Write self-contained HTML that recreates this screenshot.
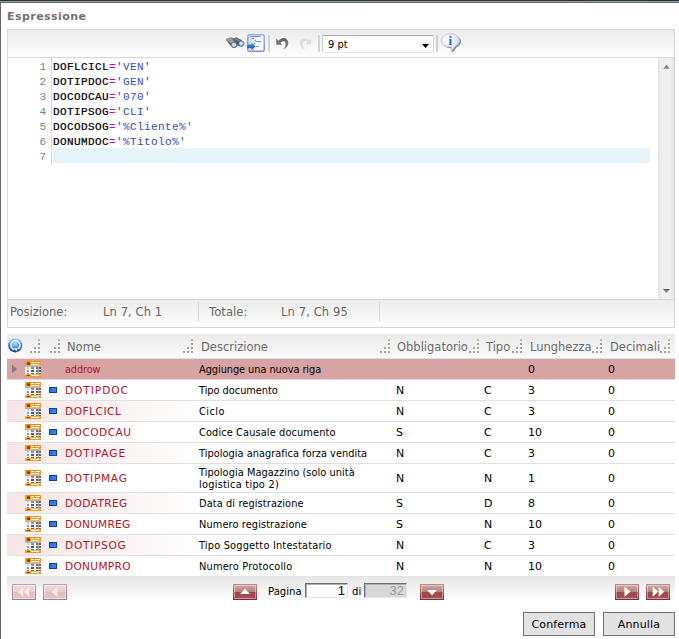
<!DOCTYPE html>
<html lang="it">
<head>
<meta charset="utf-8">
<title>Espressione</title>
<style>
*{box-sizing:border-box;margin:0;padding:0}
html,body{width:679px;height:639px;overflow:hidden;background:#fff}
body{position:relative;font-family:"DejaVu Sans","Liberation Sans",sans-serif;font-size:11px;color:#000}
.abs{position:absolute}
i{font-style:normal}
#frameTop{left:0;top:0;width:679px;height:3px;background:linear-gradient(#1f3a30 0,#1f3a30 1px,#9a9a9a 1px,#9a9a9a 2px,#676767 2px)}
#frameTop::before{content:'';position:absolute;left:0;top:0;width:679px;height:1px;background:linear-gradient(90deg,#1f3a30,#223c36 50%,#1f3448)}
#frameLeft{left:0;top:2px;width:1px;height:637px;background:#676767}
#title{left:7px;top:10px;font-weight:bold;font-size:11px;color:#727272;line-height:14px;white-space:nowrap;letter-spacing:.45px}
#toolbar{left:7px;top:29px;width:668px;height:29px;border:1px solid #d6d6d6;background:linear-gradient(#ececec,#fefefe)}
.sep{position:absolute;top:5px;width:2px;height:17px;background:#d2d2d2}
#fsel{left:314px;top:5px;width:112px;height:18px;background:#fff;border:1px solid;border-color:#a2a7b4 #d2d9e6 #dde3ee #c9d0de;border-radius:2px}
#fsel span{position:absolute;left:5px;top:2px;font-size:9.9px;line-height:14px}
#editor{left:7px;top:57px;width:668px;height:243px;border:1px solid #d6d6d6;background:#fff}
#gutter{left:0;top:0;width:44px;height:107px;border-right:1px solid #d6d6d6;background:#fff}
.ln{position:absolute;left:0;width:38px;text-align:right;font-family:"Liberation Mono",monospace;font-size:11px;line-height:15px;color:#808080;height:15px}
.cl{position:absolute;left:45px;height:15px;line-height:15px;font-family:"Liberation Mono",monospace;font-size:11px;letter-spacing:0.4px;white-space:pre;color:#000}
.cl .k{-webkit-text-stroke:.22px #000}
.cl .o{color:#c800c8}
.cl .s{color:#3848c4}
#curline{left:45px;top:90px;width:597px;height:15px;background:#e6f3f8}
#vscroll{left:650px;top:0;width:16px;height:241px;background:linear-gradient(90deg,#e3e3e3,#eeeeee 3px,#f1f1f1 12px,#e4e4e4)}
#status{left:7px;top:299px;width:668px;height:29px;border:1px solid #d6d6d6;background:linear-gradient(#ececec,#fefefe);color:#666}
#status span{position:absolute;top:5px;line-height:14px;white-space:nowrap;font-size:11.5px}
#status i{position:absolute;top:1px;width:1px;height:21px;background:#d8d8d8}
#ghead{left:7px;top:334px;width:668px;height:25px;background:linear-gradient(#e9e9e9,#fbfbfb);color:#666;border-bottom:1px solid #e0e0e0}
#ghead span.h{position:absolute;top:6px;line-height:14px;font-size:11.5px;white-space:nowrap;color:#6a6a6a}
.grip{position:absolute;top:5px}
.row{position:absolute;left:7px;width:668px;border-bottom:1px solid #e0e0e0;background:#fff}
.row.alt{background:linear-gradient(90deg,#f6e5e5 0,#fff 200px)}
.row.sel{background:#d7a3a3;border-bottom:1px solid #e6d6d6}
.row.last{border-bottom:none}
.row span{position:absolute;white-space:nowrap;line-height:13px;font-size:9.8px}
.row .n{left:58px;color:#b4141e;transform:scaleX(1.08);transform-origin:0 0}
.row.sel .n{transform:none}
.row .d{left:192px}
.row .o,.row .t,.row .l,.row .c{transform:scaleX(1.12);transform-origin:0 0}
.row .o{left:388.6px}
.row .t{left:477.4px}
.row .l{left:520.6px}
.row .c{left:600.6px}
.ico{position:absolute;left:18px}
.bsq{position:absolute;left:42px;width:8px;height:6px;background:linear-gradient(135deg,#2468de,#3a90f2);border:1px solid #173c9e}
#pager{left:7px;top:576px;width:668px;height:25px;background:linear-gradient(#dedede 0,#e6e6e6 1px,#ffffff)}
#pager span{position:absolute;top:9px;font-size:10.1px;line-height:13px}
.pbtn{position:absolute;top:8px}
.pin{position:absolute;top:7px;width:43px;height:15px;border:1px solid;border-color:#6e6e6e #e4e4e4 #e4e4e4 #6e6e6e;box-shadow:inset 1px 1px 0 #b0b0b0;font-family:"Liberation Sans",sans-serif;font-size:13px;line-height:13px;text-align:right;padding-right:2px;background:#fff;color:#000}
.btn{position:absolute;top:612px;height:24px;border:1px solid #707070;background:#e2e2e2;font-size:11px;letter-spacing:.15px;text-align:center;line-height:23px;color:#000}
</style>
</head>
<body>
<div class="abs" id="title">Espressione</div>

<div class="abs" id="toolbar">
  <svg class="abs" style="left:218px;top:7px" width="20" height="13" viewBox="0 0 20 13">
    <defs><radialGradient id="lens" cx=".45" cy=".4" r=".65"><stop offset="0" stop-color="#e4f2ff"/><stop offset="1" stop-color="#78b4ee"/></radialGradient>
    <linearGradient id="bnb" x1="0" y1="0" x2="1" y2="1"><stop offset="0" stop-color="#9a9a9a"/><stop offset=".5" stop-color="#5a5a5a"/><stop offset="1" stop-color="#3c3c3c"/></linearGradient></defs>
    <path d="M0 1.8L5.4 0.2L7.4 1.2L10.8 0.2L15.6 3.2L18.3 5.6L18.2 8L16.4 9.4L13.6 9.2L11.6 8.2L10.8 9.6L8.8 10.9L6.4 10.4L4.6 8.6L0.2 3.6Z" fill="url(#bnb)"/>
    <path d="M0.8 2.2L5.2 1L8.2 4.6L5.4 6.6Z" fill="#a8a8a8" opacity=".8"/>
    <path d="M8.2 1.4L10.6 0.9L14.4 3.6L12.6 4.8Z" fill="#8c8c8c" opacity=".8"/>
    <circle cx="8.1" cy="7.9" r="2.7" fill="url(#lens)" stroke="#4a5a6c" stroke-width=".5"/>
    <circle cx="15.4" cy="6.7" r="2.6" fill="url(#lens)" stroke="#4a5a6c" stroke-width=".5"/>
  </svg>
  <svg class="abs" style="left:239px;top:4px" width="18" height="18" viewBox="0 0 18 18">
    <defs><linearGradient id="ibg" x1="0" y1="0" x2="1" y2="1"><stop offset="0" stop-color="#a8cdf6"/><stop offset=".45" stop-color="#f2f8ff"/><stop offset="1" stop-color="#ffffff"/></linearGradient>
    <linearGradient id="ibd" x1="0" y1="0" x2="0" y2="1"><stop offset="0" stop-color="#8fb4ea"/><stop offset="1" stop-color="#8c8ad4"/></linearGradient>
    <linearGradient id="iar" x1="0" y1="0" x2="0" y2="1"><stop offset="0" stop-color="#4a94ec"/><stop offset="1" stop-color="#0f4fbf"/></linearGradient></defs>
    <rect x=".75" y=".75" width="16.5" height="16.5" rx="2" fill="url(#ibg)" stroke="url(#ibd)" stroke-width="1.5"/>
    <path d="M3.5 2.5H13.5M5 4.5H7M8.5 7.5H14.5M8 6.5H9M6.5 9.5H8.5M8.5 12.5H12M6 15.5H7" stroke="#8792a4" stroke-width="1" fill="none"/>
    <path d="M0.5 10.5H4.5V8.5L8.6 12.3L4.5 16.2V14.2H0.5Z" fill="url(#iar)"/>
  </svg>
  <i class="sep" style="left:260px"></i>
  <svg class="abs" style="left:268px;top:7px" width="13" height="13" viewBox="0 0 13 13">
    <defs><linearGradient id="ug" x1="0" y1="0" x2="0" y2="1"><stop offset="0" stop-color="#5e5e5e"/><stop offset="1" stop-color="#949494"/></linearGradient></defs>
    <path d="M0.3 1.8L0.3 7.7L6.2 7.7L4.5 6C6 3.7 9 3.7 9.5 6.3C9.9 8.6 8.6 10.8 6.8 12.6C10.6 11.2 12.6 8.4 12.2 5.4C11.6 0.6 6 -0.8 2.6 3.8Z" fill="url(#ug)"/>
  </svg>
  <svg class="abs" style="left:291px;top:7px" width="13" height="13" viewBox="0 0 13 13">
    <path d="M12.5 2L12 7.6L6.5 7.2L8.4 5.6C6.8 3.6 3.7 4 3.4 6.6C3.2 8.8 4.4 10.6 6 12.4C2.6 11.2 0.6 8.6 0.8 5.6C1.2 1.2 7 -0.6 10.4 3.6Z" fill="#dcdcdc"/>
  </svg>
  <i class="sep" style="left:310px"></i>
  <div class="abs" id="fsel"><span>9 pt</span><svg width="7" height="4" viewBox="0 0 7 4" style="position:absolute;left:99px;top:7.5px"><path d="M0 0H7L3.5 4Z" fill="#000"/></svg></div>
  <i class="sep" style="left:428px"></i>
  <svg class="abs" style="left:432px;top:3px" width="22" height="20" viewBox="0 0 22 20">
    <defs><radialGradient id="bub" cx=".35" cy=".35" r=".8"><stop offset="0" stop-color="#ffffff"/><stop offset=".6" stop-color="#e4e4fa"/><stop offset="1" stop-color="#b4b4e8"/></radialGradient></defs>
    <path d="M11.4 1.9C16.8 1.9 21 4.9 21 8.5C21 11.2 18.8 13.2 16.2 14.4C15.4 16.6 13.6 18.6 11.6 19.4C12.6 18 12.8 16.2 12.4 15.2C6.4 15.6 2.6 12.4 2.6 8.5C2.6 4.9 6.2 1.9 11.4 1.9Z" fill="#555" opacity=".75"/>
    <path d="M10.4 0.8C15.8 0.8 19.8 3.8 19.8 7.4C19.8 10.1 17.8 12.1 15.2 13.3C14.4 15.5 12.6 17.5 10.6 18.3C11.6 16.9 11.8 15.1 11.4 14.1C5.4 14.5 1.2 11.3 1.2 7.4C1.2 3.8 5.2 0.8 10.4 0.8Z" fill="url(#bub)" stroke="#b0b0dc" stroke-width=".6"/>
    <text x="10.2" y="12.2" text-anchor="middle" font-family="Liberation Serif,serif" font-weight="bold" font-size="13" fill="#1860d8">i</text>
  </svg>
</div>

<div class="abs" id="editor">
  <div class="abs" id="gutter"></div>
  <div class="abs" id="curline"></div>
  <div class="ln" style="top:2px">1</div><div class="ln" style="top:17px">2</div><div class="ln" style="top:32px">3</div><div class="ln" style="top:47px">4</div><div class="ln" style="top:62px">5</div><div class="ln" style="top:77px">6</div><div class="ln" style="top:92px">7</div>
  <div class="cl" style="top:2px"><span class="k">DOFLCICL</span><span class="o">=</span><span class="s">'VEN'</span></div><div class="cl" style="top:17px"><span class="k">DOTIPDOC</span><span class="o">=</span><span class="s">'GEN'</span></div><div class="cl" style="top:32px"><span class="k">DOCODCAU</span><span class="o">=</span><span class="s">'070'</span></div><div class="cl" style="top:47px"><span class="k">DOTIPSOG</span><span class="o">=</span><span class="s">'CLI'</span></div><div class="cl" style="top:62px"><span class="k">DOCODSOG</span><span class="o">=</span><span class="s">'%Cliente%'</span></div><div class="cl" style="top:77px"><span class="k">DONUMDOC</span><span class="o">=</span><span class="s">'%Titolo%'</span></div>
  <div class="abs" id="vscroll">
    <svg class="abs" style="left:5px;top:7px" width="7" height="4" viewBox="0 0 7 4"><defs><linearGradient id="sa1" x1="0" y1="0" x2="0" y2="1"><stop offset="0" stop-color="#555"/><stop offset="1" stop-color="#a8a8a8"/></linearGradient></defs><path d="M0 4L3.5 0L7 4Z" fill="url(#sa1)"/></svg>
    <svg class="abs" style="left:5px;top:231px" width="7" height="4" viewBox="0 0 7 4"><defs><linearGradient id="sa2" x1="0" y1="0" x2="0" y2="1"><stop offset="0" stop-color="#555"/><stop offset="1" stop-color="#a8a8a8"/></linearGradient></defs><path d="M0 0L3.5 4L7 0Z" fill="url(#sa2)"/></svg>
  </div>
</div>

<div class="abs" id="status">
  <span style="left:2px">Posizione:</span>
  <span style="left:95px;letter-spacing:.1px">Ln 7, Ch 1</span>
  <i style="left:190px"></i>
  <span style="left:201px;letter-spacing:.1px">Totale:</span>
  <span style="left:273px;letter-spacing:.12px">Ln 7, Ch 95</span>
  <i style="left:371px"></i>
</div>

<div class="abs" id="ghead">
  <svg class="abs" style="left:1px;top:4px" width="15" height="15" viewBox="0 0 15 15">
    <defs><linearGradient id="rfo" x1="0" y1="0" x2="0" y2="1"><stop offset="0" stop-color="#a4d8f4"/><stop offset=".45" stop-color="#3f84d4"/><stop offset="1" stop-color="#16409a"/></linearGradient>
    <radialGradient id="rf" cx=".5" cy=".3" r=".7"><stop offset="0" stop-color="#b0e4fa"/><stop offset="1" stop-color="#4a96e0"/></radialGradient></defs>
    <circle cx="7.2" cy="7.3" r="7.1" fill="url(#rfo)"/>
    <path d="M6.2 11.6A4.5 4.5 0 1 1 10.2 10.8" stroke="#fff" stroke-width="1.5" fill="none"/>
    <circle cx="7.2" cy="6.8" r="3.3" fill="url(#rf)"/>
    <path d="M5.8 10.6L9.6 9.8L8.6 13.2Z" fill="#fff"/>
  </svg>
  <svg class="grip" style="left:23px" width="10" height="14" viewBox="0 0 10 14" shape-rendering="crispEdges" fill="#a9a48c"><rect x="8" y="0" width="2" height="2" opacity=".7"/><rect x="8" y="4" width="2" height="2"/><rect x="4" y="8" width="2" height="2"/><rect x="8" y="8" width="2" height="2"/><rect x="0" y="12" width="2" height="2"/><rect x="4" y="12" width="2" height="2"/><rect x="8" y="12" width="2" height="2"/></svg><svg class="grip" style="left:43px" width="10" height="14" viewBox="0 0 10 14" shape-rendering="crispEdges" fill="#a9a48c"><rect x="8" y="0" width="2" height="2" opacity=".7"/><rect x="8" y="4" width="2" height="2"/><rect x="4" y="8" width="2" height="2"/><rect x="8" y="8" width="2" height="2"/><rect x="0" y="12" width="2" height="2"/><rect x="4" y="12" width="2" height="2"/><rect x="8" y="12" width="2" height="2"/></svg><svg class="grip" style="left:176px" width="10" height="14" viewBox="0 0 10 14" shape-rendering="crispEdges" fill="#a9a48c"><rect x="8" y="0" width="2" height="2" opacity=".7"/><rect x="8" y="4" width="2" height="2"/><rect x="4" y="8" width="2" height="2"/><rect x="8" y="8" width="2" height="2"/><rect x="0" y="12" width="2" height="2"/><rect x="4" y="12" width="2" height="2"/><rect x="8" y="12" width="2" height="2"/></svg><svg class="grip" style="left:373px" width="10" height="14" viewBox="0 0 10 14" shape-rendering="crispEdges" fill="#a9a48c"><rect x="8" y="0" width="2" height="2" opacity=".7"/><rect x="8" y="4" width="2" height="2"/><rect x="4" y="8" width="2" height="2"/><rect x="8" y="8" width="2" height="2"/><rect x="0" y="12" width="2" height="2"/><rect x="4" y="12" width="2" height="2"/><rect x="8" y="12" width="2" height="2"/></svg><svg class="grip" style="left:462px" width="10" height="14" viewBox="0 0 10 14" shape-rendering="crispEdges" fill="#a9a48c"><rect x="8" y="0" width="2" height="2" opacity=".7"/><rect x="8" y="4" width="2" height="2"/><rect x="4" y="8" width="2" height="2"/><rect x="8" y="8" width="2" height="2"/><rect x="0" y="12" width="2" height="2"/><rect x="4" y="12" width="2" height="2"/><rect x="8" y="12" width="2" height="2"/></svg><svg class="grip" style="left:505px" width="10" height="14" viewBox="0 0 10 14" shape-rendering="crispEdges" fill="#a9a48c"><rect x="8" y="0" width="2" height="2" opacity=".7"/><rect x="8" y="4" width="2" height="2"/><rect x="4" y="8" width="2" height="2"/><rect x="8" y="8" width="2" height="2"/><rect x="0" y="12" width="2" height="2"/><rect x="4" y="12" width="2" height="2"/><rect x="8" y="12" width="2" height="2"/></svg><svg class="grip" style="left:585px" width="10" height="14" viewBox="0 0 10 14" shape-rendering="crispEdges" fill="#a9a48c"><rect x="8" y="0" width="2" height="2" opacity=".7"/><rect x="8" y="4" width="2" height="2"/><rect x="4" y="8" width="2" height="2"/><rect x="8" y="8" width="2" height="2"/><rect x="0" y="12" width="2" height="2"/><rect x="4" y="12" width="2" height="2"/><rect x="8" y="12" width="2" height="2"/></svg><svg class="grip" style="left:653px" width="10" height="14" viewBox="0 0 10 14" shape-rendering="crispEdges" fill="#a9a48c"><rect x="8" y="0" width="2" height="2" opacity=".7"/><rect x="8" y="4" width="2" height="2"/><rect x="4" y="8" width="2" height="2"/><rect x="8" y="8" width="2" height="2"/><rect x="0" y="12" width="2" height="2"/><rect x="4" y="12" width="2" height="2"/><rect x="8" y="12" width="2" height="2"/></svg>
  <span class="h" style="left:60px">Nome</span>
  <span class="h" style="left:194px">Descrizione</span>
  <span class="h" style="left:390px">Obbligatorio</span>
  <span class="h" style="left:479px">Tipo</span>
  <span class="h" style="left:523px">Lunghezza</span>
  <span class="h" style="left:603px">Decimali</span>
</div>

<div class="row sel" style="top:359px;height:21px"><svg style="position:absolute;left:5px;top:5px" width="6" height="10" viewBox="0 0 6 10"><path d="M0 .5L5 5L0 9.5Z" fill="#848080"/></svg><svg class="ico" style="top:2px" width="16" height="16" viewBox="0 0 16 16" shape-rendering="crispEdges"><rect width="16" height="16" fill="#f8961e"/><rect x="3" y="0" width="12" height="1" fill="#e58a1a"/><rect x="0" y="4" width="16" height="1" fill="#fbb04c"/><rect x="0" y="13" width="16" height="1" fill="#fbb04c"/><rect x="0" y="5" width="16" height="8" fill="#f2f2f2"/><rect x="0" y="5" width="16" height="1" fill="#a9b5c4"/><rect x="2" y="1" width="3" height="1" fill="#8a6224"/><rect x="2" y="2" width="3" height="2" fill="#6e4a1a"/><rect x="6" y="1" width="3" height="1" fill="#fff"/><rect x="10" y="1" width="5" height="1" fill="#fff"/><rect x="6" y="3" width="8" height="1" fill="#fff"/><rect x="2" y="6" width="2" height="2" fill="#d0d0d0"/><rect x="2" y="9" width="2" height="2" fill="#9a9a9a"/><rect x="2" y="12" width="2" height="1" fill="#707880"/><rect x="6" y="6" width="3" height="2" fill="#909090"/><rect x="6" y="9" width="3" height="2" fill="#5c5c5c"/><rect x="6" y="12" width="3" height="1" fill="#606870"/><rect x="11" y="6" width="5" height="2" fill="#6a6a6a"/><rect x="11" y="9" width="5" height="2" fill="#646464"/><rect x="11" y="12" width="5" height="1" fill="#606870"/><rect x="13" y="6" width="1" height="7" fill="#aaa"/><rect x="4" y="6" width="1" height="7" fill="#fff"/><rect x="2" y="14" width="3" height="1" fill="#6e4a1a"/><rect x="6" y="14" width="8" height="1" fill="#fff"/></svg><span class="n" style="top:4px; letter-spacing:-0.14px;">addrow</span><span class="d" style="top:4px; letter-spacing:-0.059px;">Aggiunge una nuova riga</span><span class="l" style="top:4px">0</span><span class="c" style="top:4px">0</span></div>
<div class="row " style="top:380px;height:21px"><svg class="ico" style="top:2px" width="16" height="16" viewBox="0 0 16 16" shape-rendering="crispEdges"><rect width="16" height="16" fill="#f8961e"/><rect x="3" y="0" width="12" height="1" fill="#e58a1a"/><rect x="0" y="4" width="16" height="1" fill="#fbb04c"/><rect x="0" y="13" width="16" height="1" fill="#fbb04c"/><rect x="0" y="5" width="16" height="8" fill="#f2f2f2"/><rect x="0" y="5" width="16" height="1" fill="#a9b5c4"/><rect x="2" y="1" width="3" height="1" fill="#8a6224"/><rect x="2" y="2" width="3" height="2" fill="#6e4a1a"/><rect x="6" y="1" width="3" height="1" fill="#fff"/><rect x="10" y="1" width="5" height="1" fill="#fff"/><rect x="6" y="3" width="8" height="1" fill="#fff"/><rect x="2" y="6" width="2" height="2" fill="#d0d0d0"/><rect x="2" y="9" width="2" height="2" fill="#9a9a9a"/><rect x="2" y="12" width="2" height="1" fill="#707880"/><rect x="6" y="6" width="3" height="2" fill="#909090"/><rect x="6" y="9" width="3" height="2" fill="#5c5c5c"/><rect x="6" y="12" width="3" height="1" fill="#606870"/><rect x="11" y="6" width="5" height="2" fill="#6a6a6a"/><rect x="11" y="9" width="5" height="2" fill="#646464"/><rect x="11" y="12" width="5" height="1" fill="#606870"/><rect x="13" y="6" width="1" height="7" fill="#aaa"/><rect x="4" y="6" width="1" height="7" fill="#fff"/><rect x="2" y="14" width="3" height="1" fill="#6e4a1a"/><rect x="6" y="14" width="8" height="1" fill="#fff"/></svg><i class="bsq" style="top:7px"></i><span class="n" style="top:4px; letter-spacing:0.873px;">DOTIPDOC</span><span class="d" style="top:4px; letter-spacing:-0.023px;">Tipo documento</span><span class="o" style="top:4px">N</span><span class="t" style="top:4px">C</span><span class="l" style="top:4px">3</span><span class="c" style="top:4px">0</span></div>
<div class="row alt" style="top:401px;height:21px"><svg class="ico" style="top:2px" width="16" height="16" viewBox="0 0 16 16" shape-rendering="crispEdges"><rect width="16" height="16" fill="#f8961e"/><rect x="3" y="0" width="12" height="1" fill="#e58a1a"/><rect x="0" y="4" width="16" height="1" fill="#fbb04c"/><rect x="0" y="13" width="16" height="1" fill="#fbb04c"/><rect x="0" y="5" width="16" height="8" fill="#f2f2f2"/><rect x="0" y="5" width="16" height="1" fill="#a9b5c4"/><rect x="2" y="1" width="3" height="1" fill="#8a6224"/><rect x="2" y="2" width="3" height="2" fill="#6e4a1a"/><rect x="6" y="1" width="3" height="1" fill="#fff"/><rect x="10" y="1" width="5" height="1" fill="#fff"/><rect x="6" y="3" width="8" height="1" fill="#fff"/><rect x="2" y="6" width="2" height="2" fill="#d0d0d0"/><rect x="2" y="9" width="2" height="2" fill="#9a9a9a"/><rect x="2" y="12" width="2" height="1" fill="#707880"/><rect x="6" y="6" width="3" height="2" fill="#909090"/><rect x="6" y="9" width="3" height="2" fill="#5c5c5c"/><rect x="6" y="12" width="3" height="1" fill="#606870"/><rect x="11" y="6" width="5" height="2" fill="#6a6a6a"/><rect x="11" y="9" width="5" height="2" fill="#646464"/><rect x="11" y="12" width="5" height="1" fill="#606870"/><rect x="13" y="6" width="1" height="7" fill="#aaa"/><rect x="4" y="6" width="1" height="7" fill="#fff"/><rect x="2" y="14" width="3" height="1" fill="#6e4a1a"/><rect x="6" y="14" width="8" height="1" fill="#fff"/></svg><i class="bsq" style="top:7px"></i><span class="n" style="top:4px; letter-spacing:0.471px;">DOFLCICL</span><span class="d" style="top:4px; letter-spacing:0.475px;">Ciclo</span><span class="o" style="top:4px">N</span><span class="t" style="top:4px">C</span><span class="l" style="top:4px">3</span><span class="c" style="top:4px">0</span></div>
<div class="row " style="top:422px;height:21px"><svg class="ico" style="top:2px" width="16" height="16" viewBox="0 0 16 16" shape-rendering="crispEdges"><rect width="16" height="16" fill="#f8961e"/><rect x="3" y="0" width="12" height="1" fill="#e58a1a"/><rect x="0" y="4" width="16" height="1" fill="#fbb04c"/><rect x="0" y="13" width="16" height="1" fill="#fbb04c"/><rect x="0" y="5" width="16" height="8" fill="#f2f2f2"/><rect x="0" y="5" width="16" height="1" fill="#a9b5c4"/><rect x="2" y="1" width="3" height="1" fill="#8a6224"/><rect x="2" y="2" width="3" height="2" fill="#6e4a1a"/><rect x="6" y="1" width="3" height="1" fill="#fff"/><rect x="10" y="1" width="5" height="1" fill="#fff"/><rect x="6" y="3" width="8" height="1" fill="#fff"/><rect x="2" y="6" width="2" height="2" fill="#d0d0d0"/><rect x="2" y="9" width="2" height="2" fill="#9a9a9a"/><rect x="2" y="12" width="2" height="1" fill="#707880"/><rect x="6" y="6" width="3" height="2" fill="#909090"/><rect x="6" y="9" width="3" height="2" fill="#5c5c5c"/><rect x="6" y="12" width="3" height="1" fill="#606870"/><rect x="11" y="6" width="5" height="2" fill="#6a6a6a"/><rect x="11" y="9" width="5" height="2" fill="#646464"/><rect x="11" y="12" width="5" height="1" fill="#606870"/><rect x="13" y="6" width="1" height="7" fill="#aaa"/><rect x="4" y="6" width="1" height="7" fill="#fff"/><rect x="2" y="14" width="3" height="1" fill="#6e4a1a"/><rect x="6" y="14" width="8" height="1" fill="#fff"/></svg><i class="bsq" style="top:7px"></i><span class="n" style="top:4px; letter-spacing:0.442px;">DOCODCAU</span><span class="d" style="top:4px; letter-spacing:0.117px;">Codice Causale documento</span><span class="o" style="top:4px">S</span><span class="t" style="top:4px">C</span><span class="l" style="top:4px">10</span><span class="c" style="top:4px">0</span></div>
<div class="row alt" style="top:443px;height:21px"><svg class="ico" style="top:2px" width="16" height="16" viewBox="0 0 16 16" shape-rendering="crispEdges"><rect width="16" height="16" fill="#f8961e"/><rect x="3" y="0" width="12" height="1" fill="#e58a1a"/><rect x="0" y="4" width="16" height="1" fill="#fbb04c"/><rect x="0" y="13" width="16" height="1" fill="#fbb04c"/><rect x="0" y="5" width="16" height="8" fill="#f2f2f2"/><rect x="0" y="5" width="16" height="1" fill="#a9b5c4"/><rect x="2" y="1" width="3" height="1" fill="#8a6224"/><rect x="2" y="2" width="3" height="2" fill="#6e4a1a"/><rect x="6" y="1" width="3" height="1" fill="#fff"/><rect x="10" y="1" width="5" height="1" fill="#fff"/><rect x="6" y="3" width="8" height="1" fill="#fff"/><rect x="2" y="6" width="2" height="2" fill="#d0d0d0"/><rect x="2" y="9" width="2" height="2" fill="#9a9a9a"/><rect x="2" y="12" width="2" height="1" fill="#707880"/><rect x="6" y="6" width="3" height="2" fill="#909090"/><rect x="6" y="9" width="3" height="2" fill="#5c5c5c"/><rect x="6" y="12" width="3" height="1" fill="#606870"/><rect x="11" y="6" width="5" height="2" fill="#6a6a6a"/><rect x="11" y="9" width="5" height="2" fill="#646464"/><rect x="11" y="12" width="5" height="1" fill="#606870"/><rect x="13" y="6" width="1" height="7" fill="#aaa"/><rect x="4" y="6" width="1" height="7" fill="#fff"/><rect x="2" y="14" width="3" height="1" fill="#6e4a1a"/><rect x="6" y="14" width="8" height="1" fill="#fff"/></svg><i class="bsq" style="top:7px"></i><span class="n" style="top:4px; letter-spacing:0.854px;">DOTIPAGE</span><span class="d" style="top:4px; letter-spacing:0.03px;">Tipologia anagrafica forza vendita</span><span class="o" style="top:4px">N</span><span class="t" style="top:4px">C</span><span class="l" style="top:4px">3</span><span class="c" style="top:4px">0</span></div>
<div class="row " style="top:464px;height:29px"><svg class="ico" style="top:6px" width="16" height="16" viewBox="0 0 16 16" shape-rendering="crispEdges"><rect width="16" height="16" fill="#f8961e"/><rect x="3" y="0" width="12" height="1" fill="#e58a1a"/><rect x="0" y="4" width="16" height="1" fill="#fbb04c"/><rect x="0" y="13" width="16" height="1" fill="#fbb04c"/><rect x="0" y="5" width="16" height="8" fill="#f2f2f2"/><rect x="0" y="5" width="16" height="1" fill="#a9b5c4"/><rect x="2" y="1" width="3" height="1" fill="#8a6224"/><rect x="2" y="2" width="3" height="2" fill="#6e4a1a"/><rect x="6" y="1" width="3" height="1" fill="#fff"/><rect x="10" y="1" width="5" height="1" fill="#fff"/><rect x="6" y="3" width="8" height="1" fill="#fff"/><rect x="2" y="6" width="2" height="2" fill="#d0d0d0"/><rect x="2" y="9" width="2" height="2" fill="#9a9a9a"/><rect x="2" y="12" width="2" height="1" fill="#707880"/><rect x="6" y="6" width="3" height="2" fill="#909090"/><rect x="6" y="9" width="3" height="2" fill="#5c5c5c"/><rect x="6" y="12" width="3" height="1" fill="#606870"/><rect x="11" y="6" width="5" height="2" fill="#6a6a6a"/><rect x="11" y="9" width="5" height="2" fill="#646464"/><rect x="11" y="12" width="5" height="1" fill="#606870"/><rect x="13" y="6" width="1" height="7" fill="#aaa"/><rect x="4" y="6" width="1" height="7" fill="#fff"/><rect x="2" y="14" width="3" height="1" fill="#6e4a1a"/><rect x="6" y="14" width="8" height="1" fill="#fff"/></svg><i class="bsq" style="top:11px"></i><span class="n" style="top:8px; letter-spacing:0.664px;">DOTIPMAG</span><span class="d" style="top:3px;line-height:12px; letter-spacing:0.053px;">Tipologia Magazzino (solo unità</span><span class="d" style="top:15px;line-height:12px; letter-spacing:0.25px;">logistica tipo 2)</span><span class="o" style="top:8px">N</span><span class="t" style="top:8px">N</span><span class="l" style="top:8px">1</span><span class="c" style="top:8px">0</span></div>
<div class="row alt" style="top:493px;height:21px"><svg class="ico" style="top:2px" width="16" height="16" viewBox="0 0 16 16" shape-rendering="crispEdges"><rect width="16" height="16" fill="#f8961e"/><rect x="3" y="0" width="12" height="1" fill="#e58a1a"/><rect x="0" y="4" width="16" height="1" fill="#fbb04c"/><rect x="0" y="13" width="16" height="1" fill="#fbb04c"/><rect x="0" y="5" width="16" height="8" fill="#f2f2f2"/><rect x="0" y="5" width="16" height="1" fill="#a9b5c4"/><rect x="2" y="1" width="3" height="1" fill="#8a6224"/><rect x="2" y="2" width="3" height="2" fill="#6e4a1a"/><rect x="6" y="1" width="3" height="1" fill="#fff"/><rect x="10" y="1" width="5" height="1" fill="#fff"/><rect x="6" y="3" width="8" height="1" fill="#fff"/><rect x="2" y="6" width="2" height="2" fill="#d0d0d0"/><rect x="2" y="9" width="2" height="2" fill="#9a9a9a"/><rect x="2" y="12" width="2" height="1" fill="#707880"/><rect x="6" y="6" width="3" height="2" fill="#909090"/><rect x="6" y="9" width="3" height="2" fill="#5c5c5c"/><rect x="6" y="12" width="3" height="1" fill="#606870"/><rect x="11" y="6" width="5" height="2" fill="#6a6a6a"/><rect x="11" y="9" width="5" height="2" fill="#646464"/><rect x="11" y="12" width="5" height="1" fill="#606870"/><rect x="13" y="6" width="1" height="7" fill="#aaa"/><rect x="4" y="6" width="1" height="7" fill="#fff"/><rect x="2" y="14" width="3" height="1" fill="#6e4a1a"/><rect x="6" y="14" width="8" height="1" fill="#fff"/></svg><i class="bsq" style="top:7px"></i><span class="n" style="top:4px; letter-spacing:0.354px;">DODATREG</span><span class="d" style="top:4px; letter-spacing:0.105px;">Data di registrazione</span><span class="o" style="top:4px">S</span><span class="t" style="top:4px">D</span><span class="l" style="top:4px">8</span><span class="c" style="top:4px">0</span></div>
<div class="row " style="top:514px;height:21px"><svg class="ico" style="top:2px" width="16" height="16" viewBox="0 0 16 16" shape-rendering="crispEdges"><rect width="16" height="16" fill="#f8961e"/><rect x="3" y="0" width="12" height="1" fill="#e58a1a"/><rect x="0" y="4" width="16" height="1" fill="#fbb04c"/><rect x="0" y="13" width="16" height="1" fill="#fbb04c"/><rect x="0" y="5" width="16" height="8" fill="#f2f2f2"/><rect x="0" y="5" width="16" height="1" fill="#a9b5c4"/><rect x="2" y="1" width="3" height="1" fill="#8a6224"/><rect x="2" y="2" width="3" height="2" fill="#6e4a1a"/><rect x="6" y="1" width="3" height="1" fill="#fff"/><rect x="10" y="1" width="5" height="1" fill="#fff"/><rect x="6" y="3" width="8" height="1" fill="#fff"/><rect x="2" y="6" width="2" height="2" fill="#d0d0d0"/><rect x="2" y="9" width="2" height="2" fill="#9a9a9a"/><rect x="2" y="12" width="2" height="1" fill="#707880"/><rect x="6" y="6" width="3" height="2" fill="#909090"/><rect x="6" y="9" width="3" height="2" fill="#5c5c5c"/><rect x="6" y="12" width="3" height="1" fill="#606870"/><rect x="11" y="6" width="5" height="2" fill="#6a6a6a"/><rect x="11" y="9" width="5" height="2" fill="#646464"/><rect x="11" y="12" width="5" height="1" fill="#606870"/><rect x="13" y="6" width="1" height="7" fill="#aaa"/><rect x="4" y="6" width="1" height="7" fill="#fff"/><rect x="2" y="14" width="3" height="1" fill="#6e4a1a"/><rect x="6" y="14" width="8" height="1" fill="#fff"/></svg><i class="bsq" style="top:7px"></i><span class="n" style="top:4px; letter-spacing:0.217px;">DONUMREG</span><span class="d" style="top:4px; letter-spacing:0.105px;">Numero registrazione</span><span class="o" style="top:4px">S</span><span class="t" style="top:4px">N</span><span class="l" style="top:4px">10</span><span class="c" style="top:4px">0</span></div>
<div class="row alt" style="top:535px;height:21px"><svg class="ico" style="top:2px" width="16" height="16" viewBox="0 0 16 16" shape-rendering="crispEdges"><rect width="16" height="16" fill="#f8961e"/><rect x="3" y="0" width="12" height="1" fill="#e58a1a"/><rect x="0" y="4" width="16" height="1" fill="#fbb04c"/><rect x="0" y="13" width="16" height="1" fill="#fbb04c"/><rect x="0" y="5" width="16" height="8" fill="#f2f2f2"/><rect x="0" y="5" width="16" height="1" fill="#a9b5c4"/><rect x="2" y="1" width="3" height="1" fill="#8a6224"/><rect x="2" y="2" width="3" height="2" fill="#6e4a1a"/><rect x="6" y="1" width="3" height="1" fill="#fff"/><rect x="10" y="1" width="5" height="1" fill="#fff"/><rect x="6" y="3" width="8" height="1" fill="#fff"/><rect x="2" y="6" width="2" height="2" fill="#d0d0d0"/><rect x="2" y="9" width="2" height="2" fill="#9a9a9a"/><rect x="2" y="12" width="2" height="1" fill="#707880"/><rect x="6" y="6" width="3" height="2" fill="#909090"/><rect x="6" y="9" width="3" height="2" fill="#5c5c5c"/><rect x="6" y="12" width="3" height="1" fill="#606870"/><rect x="11" y="6" width="5" height="2" fill="#6a6a6a"/><rect x="11" y="9" width="5" height="2" fill="#646464"/><rect x="11" y="12" width="5" height="1" fill="#606870"/><rect x="13" y="6" width="1" height="7" fill="#aaa"/><rect x="4" y="6" width="1" height="7" fill="#fff"/><rect x="2" y="14" width="3" height="1" fill="#6e4a1a"/><rect x="6" y="14" width="8" height="1" fill="#fff"/></svg><i class="bsq" style="top:7px"></i><span class="n" style="top:4px; letter-spacing:0.675px;">DOTIPSOG</span><span class="d" style="top:4px; letter-spacing:0.192px;">Tipo Soggetto Intestatario</span><span class="o" style="top:4px">N</span><span class="t" style="top:4px">C</span><span class="l" style="top:4px">3</span><span class="c" style="top:4px">0</span></div>
<div class="row last" style="top:556px;height:20px"><svg class="ico" style="top:2px" width="16" height="16" viewBox="0 0 16 16" shape-rendering="crispEdges"><rect width="16" height="16" fill="#f8961e"/><rect x="3" y="0" width="12" height="1" fill="#e58a1a"/><rect x="0" y="4" width="16" height="1" fill="#fbb04c"/><rect x="0" y="13" width="16" height="1" fill="#fbb04c"/><rect x="0" y="5" width="16" height="8" fill="#f2f2f2"/><rect x="0" y="5" width="16" height="1" fill="#a9b5c4"/><rect x="2" y="1" width="3" height="1" fill="#8a6224"/><rect x="2" y="2" width="3" height="2" fill="#6e4a1a"/><rect x="6" y="1" width="3" height="1" fill="#fff"/><rect x="10" y="1" width="5" height="1" fill="#fff"/><rect x="6" y="3" width="8" height="1" fill="#fff"/><rect x="2" y="6" width="2" height="2" fill="#d0d0d0"/><rect x="2" y="9" width="2" height="2" fill="#9a9a9a"/><rect x="2" y="12" width="2" height="1" fill="#707880"/><rect x="6" y="6" width="3" height="2" fill="#909090"/><rect x="6" y="9" width="3" height="2" fill="#5c5c5c"/><rect x="6" y="12" width="3" height="1" fill="#606870"/><rect x="11" y="6" width="5" height="2" fill="#6a6a6a"/><rect x="11" y="9" width="5" height="2" fill="#646464"/><rect x="11" y="12" width="5" height="1" fill="#606870"/><rect x="13" y="6" width="1" height="7" fill="#aaa"/><rect x="4" y="6" width="1" height="7" fill="#fff"/><rect x="2" y="14" width="3" height="1" fill="#6e4a1a"/><rect x="6" y="14" width="8" height="1" fill="#fff"/></svg><i class="bsq" style="top:7px"></i><span class="n" style="top:4px; letter-spacing:0.296px;">DONUMPRO</span><span class="d" style="top:4px; letter-spacing:0.188px;">Numero Protocollo</span><span class="o" style="top:4px">N</span><span class="t" style="top:4px">N</span><span class="l" style="top:4px">10</span><span class="c" style="top:4px">0</span></div>

<div class="abs" id="pager">
  <svg class="pbtn" style="left:5px" width="24" height="16" viewBox="0 0 24 16"><defs><linearGradient id="gfirst" x1="0" y1="0" x2="0" y2="1"><stop offset="0" stop-color="#efdddc"/><stop offset=".5" stop-color="#e7cdcc"/><stop offset=".5" stop-color="#dfbcbc"/><stop offset="1" stop-color="#e5c6c8"/></linearGradient><linearGradient id="gfirstb" x1="0" y1="0" x2="0" y2="1"><stop offset="0" stop-color="#bfa2a0"/><stop offset="1" stop-color="#a07e82"/></linearGradient><radialGradient id="gfirstr" cx=".5" cy="1" r=".5"><stop offset="0" stop-color="#ecc0ca" stop-opacity=".9"/><stop offset="1" stop-color="#ecc0ca" stop-opacity="0"/></radialGradient></defs><rect x=".5" y=".5" width="23" height="15" fill="url(#gfirst)"/><rect x="1" y="8" width="22" height="7.5" fill="url(#gfirstr)"/><rect x=".5" y=".5" width="23" height="15" fill="none" stroke="url(#gfirstb)"/><rect x="1.5" y="1.5" width="21" height="13" fill="none" stroke="#fff" stroke-opacity=".4"/><path d="M11.3 3L5.8 8L11.3 13ZM17.3 3L11.8 8L17.3 13Z" fill="#f6eaea"/></svg><svg class="pbtn" style="left:36px" width="24" height="16" viewBox="0 0 24 16"><defs><linearGradient id="gprev" x1="0" y1="0" x2="0" y2="1"><stop offset="0" stop-color="#efdddc"/><stop offset=".5" stop-color="#e7cdcc"/><stop offset=".5" stop-color="#dfbcbc"/><stop offset="1" stop-color="#e5c6c8"/></linearGradient><linearGradient id="gprevb" x1="0" y1="0" x2="0" y2="1"><stop offset="0" stop-color="#bfa2a0"/><stop offset="1" stop-color="#a07e82"/></linearGradient><radialGradient id="gprevr" cx=".5" cy="1" r=".5"><stop offset="0" stop-color="#ecc0ca" stop-opacity=".9"/><stop offset="1" stop-color="#ecc0ca" stop-opacity="0"/></radialGradient></defs><rect x=".5" y=".5" width="23" height="15" fill="url(#gprev)"/><rect x="1" y="8" width="22" height="7.5" fill="url(#gprevr)"/><rect x=".5" y=".5" width="23" height="15" fill="none" stroke="url(#gprevb)"/><rect x="1.5" y="1.5" width="21" height="13" fill="none" stroke="#fff" stroke-opacity=".4"/><path d="M14.5 3L8.6 8L14.5 13Z" fill="#f6eaea"/></svg><svg class="pbtn" style="left:226px" width="24" height="16" viewBox="0 0 24 16"><defs><linearGradient id="gup" x1="0" y1="0" x2="0" y2="1"><stop offset="0" stop-color="#d2aaa4"/><stop offset=".5" stop-color="#b98079"/><stop offset=".5" stop-color="#9c4a49"/><stop offset="1" stop-color="#a24c52"/></linearGradient><linearGradient id="gupb" x1="0" y1="0" x2="0" y2="1"><stop offset="0" stop-color="#b98c88"/><stop offset="1" stop-color="#7a2e36"/></linearGradient><radialGradient id="gupr" cx=".5" cy="1" r=".5"><stop offset="0" stop-color="#c8587a" stop-opacity=".9"/><stop offset="1" stop-color="#c8587a" stop-opacity="0"/></radialGradient></defs><rect x=".5" y=".5" width="23" height="15" fill="url(#gup)"/><rect x="1" y="8" width="22" height="7.5" fill="url(#gupr)"/><rect x=".5" y=".5" width="23" height="15" fill="none" stroke="url(#gupb)"/><rect x="1.5" y="1.5" width="21" height="13" fill="none" stroke="#fff" stroke-opacity=".4"/><path d="M7 10L12 4.7L17 10Z" fill="#ffffff"/></svg><svg class="pbtn" style="left:413px" width="24" height="16" viewBox="0 0 24 16"><defs><linearGradient id="gdown" x1="0" y1="0" x2="0" y2="1"><stop offset="0" stop-color="#d2aaa4"/><stop offset=".5" stop-color="#b98079"/><stop offset=".5" stop-color="#9c4a49"/><stop offset="1" stop-color="#a24c52"/></linearGradient><linearGradient id="gdownb" x1="0" y1="0" x2="0" y2="1"><stop offset="0" stop-color="#b98c88"/><stop offset="1" stop-color="#7a2e36"/></linearGradient><radialGradient id="gdownr" cx=".5" cy="1" r=".5"><stop offset="0" stop-color="#c8587a" stop-opacity=".9"/><stop offset="1" stop-color="#c8587a" stop-opacity="0"/></radialGradient></defs><rect x=".5" y=".5" width="23" height="15" fill="url(#gdown)"/><rect x="1" y="8" width="22" height="7.5" fill="url(#gdownr)"/><rect x=".5" y=".5" width="23" height="15" fill="none" stroke="url(#gdownb)"/><rect x="1.5" y="1.5" width="21" height="13" fill="none" stroke="#fff" stroke-opacity=".4"/><path d="M7 6L12 11.3L17 6Z" fill="#ffffff"/></svg><svg class="pbtn" style="left:608px" width="24" height="16" viewBox="0 0 24 16"><defs><linearGradient id="gnext" x1="0" y1="0" x2="0" y2="1"><stop offset="0" stop-color="#d2aaa4"/><stop offset=".5" stop-color="#b98079"/><stop offset=".5" stop-color="#9c4a49"/><stop offset="1" stop-color="#a24c52"/></linearGradient><linearGradient id="gnextb" x1="0" y1="0" x2="0" y2="1"><stop offset="0" stop-color="#b98c88"/><stop offset="1" stop-color="#7a2e36"/></linearGradient><radialGradient id="gnextr" cx=".5" cy="1" r=".5"><stop offset="0" stop-color="#c8587a" stop-opacity=".9"/><stop offset="1" stop-color="#c8587a" stop-opacity="0"/></radialGradient></defs><rect x=".5" y=".5" width="23" height="15" fill="url(#gnext)"/><rect x="1" y="8" width="22" height="7.5" fill="url(#gnextr)"/><rect x=".5" y=".5" width="23" height="15" fill="none" stroke="url(#gnextb)"/><rect x="1.5" y="1.5" width="21" height="13" fill="none" stroke="#fff" stroke-opacity=".4"/><path d="M9.5 2.8L15.4 7.8L9.5 12.8Z" fill="#ffffff"/></svg><svg class="pbtn" style="left:639px" width="24" height="16" viewBox="0 0 24 16"><defs><linearGradient id="glast" x1="0" y1="0" x2="0" y2="1"><stop offset="0" stop-color="#d2aaa4"/><stop offset=".5" stop-color="#b98079"/><stop offset=".5" stop-color="#9c4a49"/><stop offset="1" stop-color="#a24c52"/></linearGradient><linearGradient id="glastb" x1="0" y1="0" x2="0" y2="1"><stop offset="0" stop-color="#b98c88"/><stop offset="1" stop-color="#7a2e36"/></linearGradient><radialGradient id="glastr" cx=".5" cy="1" r=".5"><stop offset="0" stop-color="#c8587a" stop-opacity=".9"/><stop offset="1" stop-color="#c8587a" stop-opacity="0"/></radialGradient></defs><rect x=".5" y=".5" width="23" height="15" fill="url(#glast)"/><rect x="1" y="8" width="22" height="7.5" fill="url(#glastr)"/><rect x=".5" y=".5" width="23" height="15" fill="none" stroke="url(#glastb)"/><rect x="1.5" y="1.5" width="21" height="13" fill="none" stroke="#fff" stroke-opacity=".4"/><path d="M6.7 2.8L12.2 7.8L6.7 12.8ZM12.7 2.8L18.2 7.8L12.7 12.8Z" fill="#ffffff"/></svg>
  <span style="left:261px">Pagina</span>
  <div class="pin" style="left:298px">1</div>
  <span style="left:345px">di</span>
  <div class="pin" style="left:357px;background:#d8d8d8;color:#9a9a9a">32</div>
</div>

<div class="btn" style="left:523px;width:72px">Conferma</div>
<div class="btn" style="left:603px;width:72px">Annulla</div>

<div class="abs" id="frameTop"></div>
<div class="abs" id="frameLeft"></div>
</body>
</html>
